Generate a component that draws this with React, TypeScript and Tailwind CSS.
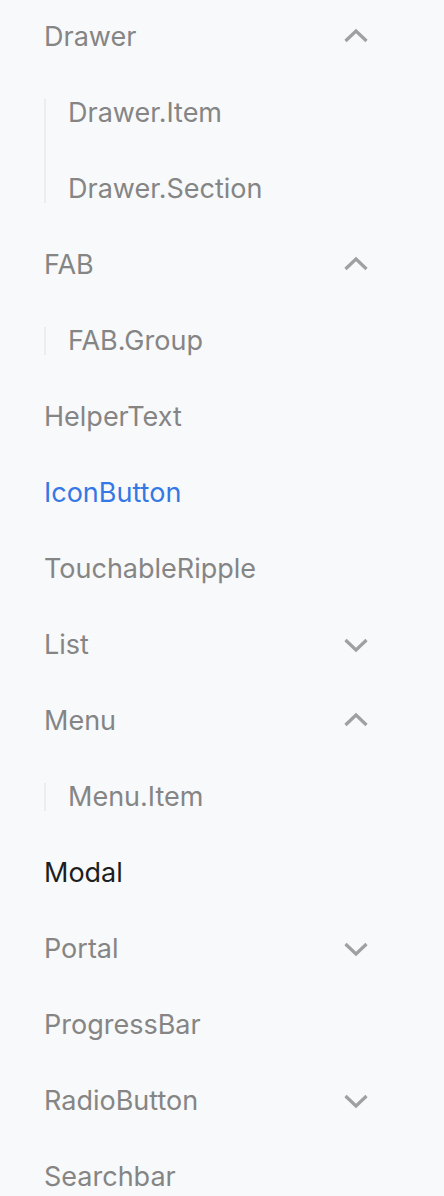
import React from "react";

type Item = {
  label: string;
  chevron?: "up" | "down";
  children?: string[];
  tone?: "active" | "dark";
};

const items: Item[] = [
  { label: "Drawer", chevron: "up", children: ["Drawer.Item", "Drawer.Section"] },
  { label: "FAB", chevron: "up", children: ["FAB.Group"] },
  { label: "HelperText" },
  { label: "IconButton", tone: "active" },
  { label: "TouchableRipple" },
  { label: "List", chevron: "down" },
  { label: "Menu", chevron: "up", children: ["Menu.Item"] },
  { label: "Modal", tone: "dark" },
  { label: "Portal", chevron: "down" },
  { label: "ProgressBar" },
  { label: "RadioButton", chevron: "down" },
  { label: "Searchbar" },
];

function Chevron({ dir }: { dir: "up" | "down" }) {
  return (
    <svg width="26" height="16" viewBox="0 0 26 16" className="block">
      <polyline
        points={dir === "up" ? "2.5,13 13,3 23.5,13" : "2.5,3 13,13 23.5,3"}
        fill="none"
        stroke="#a0a0a0"
        strokeWidth="3.2"
        strokeLinecap="butt"
        strokeLinejoin="miter"
      />
    </svg>
  );
}

export default function App() {
  return (
    <div
      className="min-h-[1196px] w-[444px] overflow-hidden bg-[#f8f9fa]"
      style={{ fontFamily: "Inter, 'Noto Sans', sans-serif" }}
    >
      <ul className="mt-[-1px] flex flex-col">
        {items.map((it) => (
          <li key={it.label}>
            <div className="flex items-center justify-between py-6 pl-[44px] pr-[75px]">
              <span
                className={
                  "text-[27px] leading-[28px] " +
                  (it.tone === "active"
                    ? "text-[#3578e5]"
                    : it.tone === "dark"
                    ? "text-[#1c1e21]"
                    : "text-[#858585]")
                }
              >
                {it.label}
              </span>
              {it.chevron && (
                <span className={it.chevron === "up" ? "-mt-[3px]" : "mt-0"}>
                  <Chevron dir={it.chevron} />
                </span>
              )}
            </div>
            {it.children && (
              <ul className="my-6 ml-[44px] flex flex-col gap-12 border-l-2 border-[#ededf0]">
                {it.children.map((c) => (
                  <li key={c} className="pl-[22px] text-[27px] leading-[28px] text-[#858585]">
                    {c}
                  </li>
                ))}
              </ul>
            )}
          </li>
        ))}
      </ul>
    </div>
  );
}
